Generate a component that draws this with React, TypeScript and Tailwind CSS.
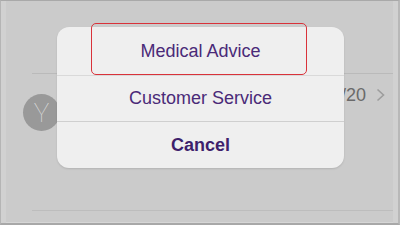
import React from "react";

export default function App() {
  return (
    <div
      className="relative w-[400px] h-[225px] overflow-hidden bg-[#cbcbcb] border-t border-l border-r-2 border-b-2 border-t-[#a9a9a9] border-l-[#b5b5b5] border-r-[#b8b8b8] border-b-[#a8a8a8]"
      style={{ fontFamily: '"Liberation Sans", Arial, sans-serif' }}
    >
      <div className="flex flex-col h-full border-l-[5px] border-r-[5px] border-l-[#d1d1d1] border-r-[#d1d1d1]">
        <div className="h-[72px]" />
        <div className="h-px bg-[#bababa] ml-[26px]" />
        <div className="h-[136px] flex justify-between items-start">
          <div
            className="mt-[20px] ml-[17px] w-[37px] h-[37px] rounded-full bg-[#999999] flex items-center justify-center text-[#d8d8d8] text-[26px] font-thin leading-none"
            style={{ fontFamily: "Roboto, sans-serif" }}
          >
            Y
          </div>
          <div className="mt-[9px] mr-[8px] flex items-center gap-[10px] text-[#6a6a6a] text-[18px] leading-[24px]">
            <span>/20</span>
            <svg width="9" height="14" viewBox="0 0 9 14" fill="none">
              <path d="M1.5 1.5 L7.5 7 L1.5 12.5" stroke="#9d9d9d" strokeWidth="1.6" />
            </svg>
          </div>
        </div>
        <div className="h-px bg-[#bdbdbd] ml-[26px]" />
        <div className="flex-1" />
        <div className="h-px bg-[#d6d6d6]" />
      </div>

      {/* Action sheet overlay */}
      <div className="absolute left-[56px] top-[26px] w-[287px] rounded-[12px] bg-[#efefef] shadow-[0_1px_2px_rgba(0,0,0,0.12)] flex flex-col text-[18px] text-[#4a2a78]">
        <div className="h-[48px] flex items-center justify-center">Medical Advice</div>
        <div className="h-px bg-[#d9d9d9]" />
        <div className="h-[45px] flex items-center justify-center">Customer Service</div>
        <div className="h-px bg-[#cfcfcf]" />
        <div className="h-[46px] flex items-center justify-center font-bold text-[#3e1f6c]">Cancel</div>
      </div>

      {/* Red highlight annotation */}
      <div className="absolute left-[90px] top-[22px] w-[216px] h-[52px] rounded-[5px] border border-[#d9323a]" />
    </div>
  );
}
